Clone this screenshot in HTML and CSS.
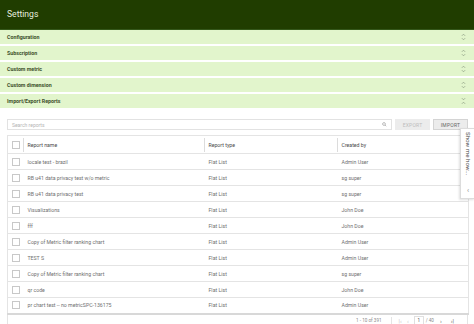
FILE: index.html
```html
<!DOCTYPE html>
<html lang="en">
<head>
    <meta charset="UTF-8">
    <title>Settings</title>
    <link rel="stylesheet" href="styles.css">
</head>
<body>
    <header class="topbar">Settings</header>

    <div class="accordion">
        <div class="acc-row"><span>Configuration</span><svg class="chev" viewBox="0 0 6 10"><path d="M1 3.5 L3 1.5 L5 3.5 M1 6.5 L3 8.5 L5 6.5"/></svg></div>
        <div class="acc-row"><span>Subscription</span><svg class="chev" viewBox="0 0 6 10"><path d="M1 3.5 L3 1.5 L5 3.5 M1 6.5 L3 8.5 L5 6.5"/></svg></div>
        <div class="acc-row"><span>Custom metric</span><svg class="chev" viewBox="0 0 6 10"><path d="M1 3.5 L3 1.5 L5 3.5 M1 6.5 L3 8.5 L5 6.5"/></svg></div>
        <div class="acc-row"><span>Custom dimension</span><svg class="chev" viewBox="0 0 6 10"><path d="M1 3.5 L3 1.5 L5 3.5 M1 6.5 L3 8.5 L5 6.5"/></svg></div>
        <div class="acc-row"><span>Import/Export Reports</span><svg class="chev" viewBox="0 0 6 10"><path d="M1 1.5 L3 3.5 L5 1.5 M1 8.5 L3 6.5 L5 8.5"/></svg></div>
    </div>

    <main class="reports">
        <div class="toolbar">
            <div class="search">
                <span class="placeholder">Search reports</span>
                <svg class="search-icon" viewBox="0 0 10 10"><circle cx="4" cy="4" r="2.8"/><path d="M6 6 L8.5 8.5"/></svg>
            </div>
            <button class="btn btn-disabled">EXPORT</button>
            <button class="btn">IMPORT</button>
        </div>

        <table class="grid">
            <colgroup>
                <col class="c-check">
                <col class="c-name">
                <col class="c-type">
                <col class="c-user">
            </colgroup>
            <thead>
                <tr>
                    <th><span class="box"></span></th>
                    <th>Report name</th>
                    <th>Report type</th>
                    <th>Created by</th>
                </tr>
            </thead>
            <tbody>
                <tr><td><span class="box"></span></td><td>locale test - brazil</td><td>Flat List</td><td>Admin User</td></tr>
                <tr><td><span class="box"></span></td><td>RB u41 data privacy test w/o metric</td><td>Flat List</td><td>sg super</td></tr>
                <tr><td><span class="box"></span></td><td>RB u41 data privacy test</td><td>Flat List</td><td>sg super</td></tr>
                <tr><td><span class="box"></span></td><td>Visualizations</td><td>Flat List</td><td>John Doe</td></tr>
                <tr><td><span class="box"></span></td><td>fff</td><td>Flat List</td><td>John Doe</td></tr>
                <tr><td><span class="box"></span></td><td>Copy of Metric filter ranking chart</td><td>Flat List</td><td>Admin User</td></tr>
                <tr><td><span class="box"></span></td><td>TEST S</td><td>Flat List</td><td>Admin User</td></tr>
                <tr><td><span class="box"></span></td><td>Copy of Metric filter ranking chart</td><td>Flat List</td><td>sg super</td></tr>
                <tr><td><span class="box"></span></td><td>qr code</td><td>Flat List</td><td>John Doe</td></tr>
                <tr><td><span class="box"></span></td><td>pr chart test -- no metricSPC-136175</td><td>Flat List</td><td>Admin User</td></tr>
            </tbody>
        </table>

        <div class="pager">
            <span class="count">1 - 10 of 391</span>
            <span class="sep"></span>
            <span class="pg">|&lsaquo;</span>
            <span class="pg">&lsaquo;</span>
            <span class="page-box">1</span>
            <span class="total">/ 40</span>
            <span class="pg dark">&rsaquo;</span>
            <span class="pg dark">&rsaquo;|</span>
        </div>
    </main>

    <aside class="help-tab">
        <span class="help-text">Show me how...</span>
        <span class="help-arrow">&lsaquo;</span>
    </aside>
</body>
</html>
```

FILE: styles.css
```css
:root {
    --green-dark: #203d00;
    --green-light: #e2f5cc;
    --green-text: #3c4f2a;
    --line: #e4e4e4;
    --text: #707070;
}

* {
    margin: 0;
    padding: 0;
    box-sizing: border-box;
}

body {
    font-family: Roboto, "Liberation Sans", sans-serif;
    background: #ffffff;
    color: var(--text);
    width: 474px;
    height: 324px;
    overflow: hidden;
    position: relative;
}

.topbar {
    height: 30px;
    background: var(--green-dark);
    border-bottom: 1px solid #34571a;
    color: #e6ecdf;
    font-size: 8.6px;
    line-height: 28px;
    padding-left: 7px;
}

.accordion {
    display: flex;
    flex-direction: column;
    gap: 2px;
}

.acc-row {
    height: 14px;
    background: var(--green-light);
    display: flex;
    align-items: center;
    justify-content: space-between;
    padding: 0 8px 0 7px;
    font-size: 5.3px;
    font-weight: 700;
    color: var(--green-text);
}

.chev {
    width: 5px;
    height: 8px;
    fill: none;
    stroke: #8a9a80;
    stroke-width: 0.9;
}

.reports {
    padding: 11px 6px 0 7px;
}

.toolbar {
    display: flex;
    gap: 3px;
    height: 11px;
    margin-bottom: 5px;
}

.search {
    flex: 1;
    border: 1px solid #e2e2e2;
    display: flex;
    align-items: center;
    justify-content: space-between;
    padding: 0 4px 0 4px;
    font-size: 5px;
    color: #b5b5b5;
}

.search-icon {
    width: 5px;
    height: 5px;
    fill: none;
    stroke: #888;
    stroke-width: 1.1;
}

.btn {
    font-family: inherit;
    font-size: 5px;
    width: 35px;
    border: 1px solid #d4d4d4;
    background: #ececec;
    color: #666;
    letter-spacing: 0.2px;
}

.btn-disabled {
    border-color: #ececec;
    color: #bdbdbd;
}

.grid {
    width: 461px;
    border-collapse: collapse;
    table-layout: fixed;
    font-size: 5.2px;
    border-left: 1px solid var(--line);
    border-right: 1px solid var(--line);
    border-top: 1px solid var(--line);
}

.c-check { width: 15px; }
.c-name { width: 181px; }
.c-type { width: 133px; }
.c-user { width: 132px; }

.grid th {
    height: 18px;
    text-align: left;
    font-weight: 400;
    color: #4a4a4a;
    padding-left: 5px;
    border-bottom: 1px solid var(--line);
    position: relative;
}

.grid th + th::before {
    content: '';
    position: absolute;
    left: 0;
    top: 2px;
    bottom: 1px;
    border-left: 1px solid #dcdcdc;
}

.grid td {
    height: 16px;
    padding-left: 5px;
    border-bottom: 1px solid var(--line);
    white-space: nowrap;
}

.grid th:first-child,
.grid td:first-child {
    padding-left: 4px;
}

.grid tbody tr:last-child td {
    border-bottom: 2px solid #d8d8d8;
}

.box {
    display: block;
    width: 8px;
    height: 8px;
    border: 1px solid #c8c8c8;
    background: #fff;
}

.pager {
    display: flex;
    align-items: center;
    justify-content: flex-end;
    height: 11px;
    border-left: 1px solid var(--line);
    border-right: 1px solid var(--line);
    padding-right: 8px;
    font-size: 4.6px;
    color: #8a8a8a;
}

.count {
    margin-right: 9px;
}

.sep {
    width: 1px;
    height: 7px;
    background: #e4e4e4;
    margin-right: 7px;
}

.pg {
    font-size: 6px;
    color: #c6c6c6;
    margin-right: 5px;
}

.pg.dark {
    color: #666;
    margin-left: 4px;
    margin-right: 5px;
}

.page-box {
    border: 1px solid #e0e0e0;
    width: 10px;
    height: 9px;
    text-align: center;
    line-height: 7px;
    color: #555;
    margin-right: 2px;
}

.total {
    margin-right: 2px;
}

.help-tab {
    position: absolute;
    left: 460px;
    top: 128px;
    width: 15px;
    height: 71px;
    background: #fff;
    border: 1px solid #dcdcdc;
    border-right: none;
    box-shadow: -1px 1px 2px rgba(0, 0, 0, 0.12);
    display: flex;
    flex-direction: column;
    align-items: center;
    padding-top: 3px;
}

.help-text {
    writing-mode: vertical-rl;
    font-size: 6.2px;
    color: #444;
    flex: 1;
}

.help-arrow {
    font-size: 7px;
    color: #888;
    margin-bottom: 3px;
}
```
